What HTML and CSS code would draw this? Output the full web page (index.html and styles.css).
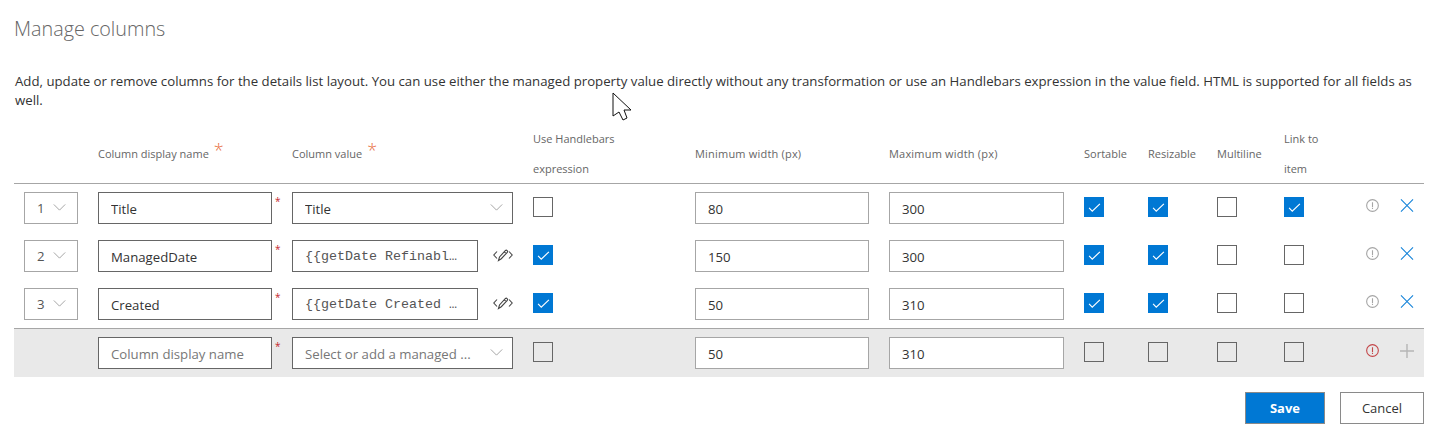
FILE: index.html
```html
<!DOCTYPE html>
<html lang="en">
<head>
<meta charset="utf-8">
<title>Manage columns</title>
<link rel="stylesheet" href="styles.css">
</head>
<body>
<svg width="0" height="0" class="defs">
  <symbol id="chev" viewBox="0 0 14 8"><path d="M.5.5 7 7 13.500.5" fill="none" stroke="currentColor"/></symbol>
  <symbol id="check" viewBox="0 0 14 10"><path d="M1 5.500 4.500 9 13 1" fill="none" stroke="#fff" stroke-width="1.300"/></symbol>
  <symbol id="info" viewBox="0 0 14 14"><circle cx="7" cy="7" r="6.300" fill="none" stroke="currentColor" stroke-width="1.200"/><path d="M7 3.500v5M7 9.500v1.200" stroke="currentColor" stroke-width="1.200" fill="none"/></symbol>
  <symbol id="close" viewBox="0 0 14 14"><path d="M.5.500l13 13M13.500.500l-13 13" stroke="currentColor" stroke-width="1.100" fill="none"/></symbol>
  <symbol id="plus" viewBox="0 0 14 14"><path d="M7 0v14M0 7h14" stroke="currentColor" stroke-width="1.400" fill="none"/></symbol>
  <symbol id="code" viewBox="0 0 20 14"><path d="M4 3.500.8 7 4 10.500M16 3.500 19.200 7 16 10.500" fill="none" stroke="#444" stroke-width="1.100"/><path d="M5.500 12.500l1-3.500 6-6.500c1-1 2.800.500 1.800 1.800l-6 6.400zM11.300 3.800l2 1.800" fill="none" stroke="#444" stroke-width="1.100"/></symbol>
</svg>
<main class="page">
  <h1 class="title">Manage columns</h1>
  <p class="desc">Add, update or remove columns for the details list layout. You can use either the managed property value directly without any transformation or use an Handlebars expression in the value field. HTML is supported for all fields as well.</p>

  <div class="grid head">
    <div></div>
    <div class="hcell">Column display name<span class="star">*</span></div>
    <div class="hcell">Column value<span class="star">*</span></div>
    <div class="hcell">Use Handlebars<br>expression</div>
    <div class="hcell wide">Minimum width (px)</div>
    <div class="hcell wide">Maximum width (px)</div>
    <div class="hcell">Sortable</div>
    <div class="hcell">Resizable</div>
    <div class="hcell">Multiline</div>
    <div class="hcell">Link to<br>item</div>
    <div></div>
  </div>

  <div class="grid row">
    <div class="cell"><div class="field seq"><span>1</span><svg class="chev"><use href="#chev"/></svg></div></div>
    <div class="cell req"><input class="field input" value="Title"><span class="mark">*</span></div>
    <div class="cell"><div class="field combo"><span class="combo-text">Title</span><svg class="chev"><use href="#chev"/></svg></div></div>
    <div class="cell"><span class="box"></span></div>
    <div class="cell"><input class="field input soft" value="80"></div>
    <div class="cell"><input class="field input soft" value="300"></div>
    <div class="cell"><span class="box on"><svg class="tick"><use href="#check"/></svg></span></div>
    <div class="cell"><span class="box on"><svg class="tick"><use href="#check"/></svg></span></div>
    <div class="cell"><span class="box"></span></div>
    <div class="cell"><span class="box on"><svg class="tick"><use href="#check"/></svg></span></div>
    <div class="cell actions"><svg class="ico muted"><use href="#info"/></svg><svg class="ico blue"><use href="#close"/></svg></div>
  </div>

  <div class="grid row">
    <div class="cell"><div class="field seq"><span>2</span><svg class="chev"><use href="#chev"/></svg></div></div>
    <div class="cell req"><input class="field input" value="ManagedDate"><span class="mark">*</span></div>
    <div class="cell withicon"><input class="field input mono" value="{{getDate RefinableDate00 'LL'}}"><svg class="code"><use href="#code"/></svg></div>
    <div class="cell"><span class="box on"><svg class="tick"><use href="#check"/></svg></span></div>
    <div class="cell"><input class="field input soft" value="150"></div>
    <div class="cell"><input class="field input soft" value="300"></div>
    <div class="cell"><span class="box on"><svg class="tick"><use href="#check"/></svg></span></div>
    <div class="cell"><span class="box on"><svg class="tick"><use href="#check"/></svg></span></div>
    <div class="cell"><span class="box"></span></div>
    <div class="cell"><span class="box"></span></div>
    <div class="cell actions"><svg class="ico muted"><use href="#info"/></svg><svg class="ico blue"><use href="#close"/></svg></div>
  </div>

  <div class="grid row">
    <div class="cell"><div class="field seq"><span>3</span><svg class="chev"><use href="#chev"/></svg></div></div>
    <div class="cell req"><input class="field input" value="Created"><span class="mark">*</span></div>
    <div class="cell withicon"><input class="field input mono" value="{{getDate Created 'LL'}} and more"><svg class="code"><use href="#code"/></svg></div>
    <div class="cell"><span class="box on"><svg class="tick"><use href="#check"/></svg></span></div>
    <div class="cell"><input class="field input soft" value="50"></div>
    <div class="cell"><input class="field input soft" value="310"></div>
    <div class="cell"><span class="box on"><svg class="tick"><use href="#check"/></svg></span></div>
    <div class="cell"><span class="box on"><svg class="tick"><use href="#check"/></svg></span></div>
    <div class="cell"><span class="box"></span></div>
    <div class="cell"><span class="box"></span></div>
    <div class="cell actions"><svg class="ico muted"><use href="#info"/></svg><svg class="ico blue"><use href="#close"/></svg></div>
  </div>

  <div class="grid row add">
    <div class="cell"></div>
    <div class="cell req"><input class="field input" placeholder="Column display name"><span class="mark">*</span></div>
    <div class="cell"><div class="field combo"><span class="combo-text hint">Select or add a managed ...</span><svg class="chev"><use href="#chev"/></svg></div></div>
    <div class="cell"><span class="box"></span></div>
    <div class="cell"><input class="field input soft" value="50"></div>
    <div class="cell"><input class="field input soft" value="310"></div>
    <div class="cell"><span class="box"></span></div>
    <div class="cell"><span class="box"></span></div>
    <div class="cell"><span class="box"></span></div>
    <div class="cell"><span class="box"></span></div>
    <div class="cell actions"><svg class="ico red"><use href="#info"/></svg><svg class="ico grey"><use href="#plus"/></svg></div>
  </div>

  <div class="footer">
    <button class="btn primary">Save</button>
    <button class="btn">Cancel</button>
  </div>

  <svg class="pointer" width="20" height="29" viewBox="0 0 20 29"><path d="M1 1v23l6-4 4 8 4-2-3-8h7z" fill="#fff" stroke="#111"/></svg>
</main>
</body>
</html>
```
FILE: styles.css
```css
* { box-sizing: border-box; }
html, body { margin: 0; background: #fff; }
body { font-family: "Open Sans", "Noto Sans", sans-serif; color: #333; overflow: hidden; }
.defs { position: absolute; }
.page { position: relative; width: 1440px; height: 434px; padding: 0 16px 0 14px; }
.title { margin: 0; padding-top: 15px; height: 72px; font-size: 19.75px; line-height: 28px; font-weight: 300; color: #666; }
.desc { margin: 0; padding-left: 1px; font-size: 13.22px; line-height: 19px; color: #333; height: 52px; }

.grid { display: grid; grid-template-columns: 74px 194px 241px 162px 194px 195px 64px 69px 67px 82px 68px; width: 1410px; }
.head { height: 60px; border-bottom: 1px solid #a6a6a6; align-items: center; }
.hcell { padding-left: 10px; font-size: 11px; line-height: 30px; color: #666; white-space: nowrap; }
.hcell.wide { letter-spacing: .2px; }
.star { color: #e86f42; font-size: 18px; font-weight: 300; line-height: 10px; margin-left: 5px; vertical-align: 1px; }

.row { height: 48px; }
.row.add { height: 49px; background: #e9e9e9; border-top: 1px solid #a6a6a6; }
.cell { padding: 8px 10px 0; display: flex; align-items: flex-start; position: relative; }

.field { height: 32px; width: 100%; border: 1px solid #666; background: #fff; font: inherit; font-size: 13.2px; color: #333; display: flex; align-items: center; padding: 1px 12px 0; border-radius: 0; outline: 0; }
.input { display: block; text-overflow: ellipsis; }
.input::placeholder { color: #777; opacity: 1; }
.soft { border-color: #a6a6a6; }
.mono { font-family: "Liberation Mono", monospace; font-size: 13.33px; color: #555; width: 186px; flex: none; padding: 0 13px 0 12px; }
.seq { border-color: #a6a6a6; justify-content: space-between; padding: 0 11px 0 12px; color: #555; }
.combo { justify-content: space-between; padding-right: 9px; }
.combo-text { flex: 1; min-width: 0; overflow: hidden; white-space: nowrap; }
.hint { color: #777; }
.chev { width: 13px; height: 7px; color: #999; flex: none; margin-top: -2px; }

.mark { position: absolute; left: calc(100% - 7px); top: 12px; color: #c4262e; font-size: 10px; line-height: 10px; }
.withicon { gap: 15px; }
.code { width: 20px; height: 14px; flex: none; margin-top: 8px; }

.box { display: flex; align-items: center; justify-content: center; width: 20px; height: 20px; margin-top: 5px; border: 1px solid #666; flex: none; }
.box.on { background: #0078d4; border-color: #0078d4; }
.tick { width: 13px; height: 9px; }

.actions { padding-top: 15px; gap: 21px; }
.ico { width: 13px; height: 13px; flex: none; }
.ico.muted { color: #a6a6a6; }
.ico.blue { width: 14px; color: #0f80d8; }
.ico.red { color: #c4474a; }
.ico.grey { width: 14px; height: 14px; color: #b5b5b5; }

.footer { display: flex; justify-content: flex-end; gap: 15px; padding-top: 15px; width: 1410px; }
.btn { height: 32px; width: 84px; border: 1px solid #8a8a8a; background: #fff; font: inherit; font-size: 13px; color: #333; padding: 0; }
.btn.primary { width: 80px; background: #0078d4; color: #fff; font-weight: 700; }

.pointer { position: absolute; left: 612px; top: 92px; }
```
